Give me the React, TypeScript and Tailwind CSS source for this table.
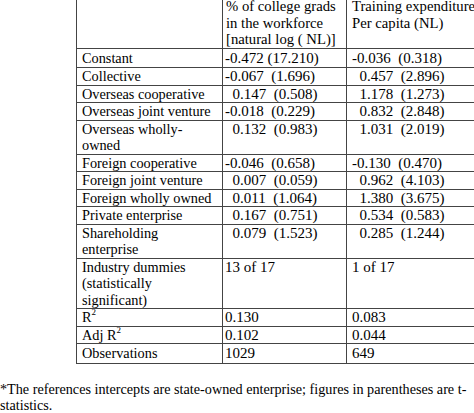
import React from "react";

const S = "\u00a0";
const D = "\u00a0\u00a0";
const rows: { label: string[]; a: string; b: string }[] = [
  { label: ["Constant"], a: `-0.472${S}(17.210)`, b: `-0.036${D}(0.318)` },
  { label: ["Collective"], a: `-0.067${D}(1.696)`, b: `${D}0.457${D}(2.896)` },
  { label: ["Overseas cooperative"], a: `${D}0.147${D}(0.508)`, b: `${D}1.178${D}(1.273)` },
  { label: ["Overseas joint venture"], a: `-0.018${D}(0.229)`, b: `${D}0.832${D}(2.848)` },
  { label: ["Overseas wholly-", "owned"], a: `${D}0.132${D}(0.983)`, b: `${D}1.031${D}(2.019)` },
  { label: ["Foreign cooperative"], a: `-0.046${D}(0.658)`, b: `-0.130${D}(0.470)` },
  { label: ["Foreign joint venture"], a: `${D}0.007${D}(0.059)`, b: `${D}0.962${D}(4.103)` },
  { label: ["Foreign wholly owned"], a: `${D}0.011${D}(1.064)`, b: `${D}1.380${D}(3.675)` },
  { label: ["Private enterprise"], a: `${D}0.167${D}(0.751)`, b: `${D}0.534${D}(0.583)` },
  { label: ["Shareholding", "enterprise"], a: `${D}0.079${D}(1.523)`, b: `${D}0.285${D}(1.244)` },
  { label: ["Industry dummies", "(statistically", "significant)"], a: "13 of 17", b: "1 of 17" },
];

const cell = "border border-[#444] align-top";

export default function App() {
  return (
    <div
      className="w-[474px] h-[413px] overflow-hidden bg-white text-black relative"
      style={{ fontFamily: '"Liberation Serif", "Times New Roman", serif' }}
    >
      <table className="ml-[76px] mt-[-6px] border-collapse text-[14.3px] leading-[16.5px] w-[420px] table-fixed">
        <colgroup>
          <col className="w-[146px]" />
          <col className="w-[124px]" />
          <col className="w-[150px]" />
        </colgroup>
        <tbody>
          <tr>
            <td className={`${cell} pl-[5px] pt-[3px]`}></td>
            <td className={`${cell} pl-[3px] pt-[3px] whitespace-nowrap text-[14.7px]`}>
              <div>% of college grads</div>
              <div>in the workforce</div>
              <div>[natural log ( NL)]</div>
            </td>
            <td className={`${cell} pl-[5px] pt-[3px] whitespace-nowrap text-[14.7px]`}>
              <div>Training expenditure</div>
              <div>Per capita (NL)</div>
            </td>
          </tr>
          {rows.map((r, i) => (
            <tr key={i}>
              <td className={`${cell} pl-[5px] ${i === 0 ? "pt-[1px] pb-[1px]" : ""}`}>
                {r.label.map((l, j) => (
                  <div key={j}>{l}</div>
                ))}
              </td>
              <td className={`${cell} pl-[2px] whitespace-nowrap text-[15px] ${i === 0 ? "pt-[1px] pb-[1px]" : ""}`}>{r.a}</td>
              <td className={`${cell} pl-[5px] whitespace-nowrap text-[15px] ${i === 0 ? "pt-[1px] pb-[1px]" : ""}`}>{r.b}</td>
            </tr>
          ))}
          <tr>
            <td className={`${cell} pl-[5px]`}>
              R<sup className="text-[9px] top-[-7px]">2</sup>
            </td>
            <td className={`${cell} pl-[2px] text-[15px]`}>0.130</td>
            <td className={`${cell} pl-[5px] text-[15px]`}>0.083</td>
          </tr>
          <tr>
            <td className={`${cell} pl-[5px]`}>
              Adj R<sup className="text-[9px] top-[-7px]">2</sup>
            </td>
            <td className={`${cell} pl-[2px] text-[15px]`}>0.102</td>
            <td className={`${cell} pl-[5px] text-[15px]`}>0.044</td>
          </tr>
          <tr>
            <td className={`${cell} pl-[5px] pt-[1px] pb-[1px]`}>Observations</td>
            <td className={`${cell} pl-[2px] pt-[1px] pb-[1px] text-[15px]`}>1029</td>
            <td className={`${cell} pl-[5px] pt-[1px] pb-[1px] text-[15px]`}>649</td>
          </tr>
        </tbody>
      </table>
      <p className="mt-[17px] text-[14.2px] leading-[16px] w-[474px] whitespace-nowrap">
        *The references intercepts are state-owned enterprise; figures in parentheses are t-
        <br />
        statistics.
      </p>
    </div>
  );
}
